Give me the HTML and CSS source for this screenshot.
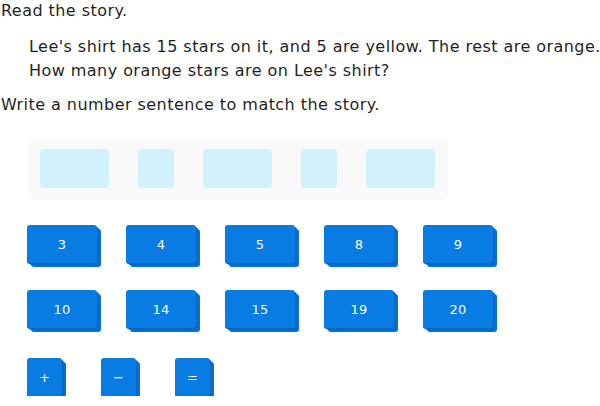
FILE: index.html
```html
<!DOCTYPE html>
<html>
<head>
<meta charset="utf-8">
<link rel="stylesheet" href="styles.css">
</head>
<body>
<div class="page">
  <p class="instr">Read the story.</p>
  <div class="story">
    <p>Lee's shirt has 15 stars on it, and 5 are yellow. The rest are orange.</p>
    <p>How many orange stars are on Lee's shirt?</p>
  </div>
  <p class="instr second">Write a number sentence to match the story.</p>
  <div class="answer">
    <div class="slot wide"></div>
    <div class="slot narrow"></div>
    <div class="slot wide"></div>
    <div class="slot narrow"></div>
    <div class="slot wide"></div>
  </div>
  <div class="tiles">
    <div class="row nums">
      <div class="tile">3</div>
      <div class="tile">4</div>
      <div class="tile">5</div>
      <div class="tile">8</div>
      <div class="tile">9</div>
    </div>
    <div class="row nums">
      <div class="tile">10</div>
      <div class="tile">14</div>
      <div class="tile">15</div>
      <div class="tile">19</div>
      <div class="tile">20</div>
    </div>
    <div class="row ops">
      <div class="tile op">+</div>
      <div class="tile op">&minus;</div>
      <div class="tile op">=</div>
    </div>
  </div>
</div>
</body>
</html>
```
FILE: styles.css
```css
html, body {
  margin: 0;
  padding: 0;
  background: #ffffff;
}
.page {
  font-family: "DejaVu Sans", Verdana, sans-serif;
  font-size: 16px;
  letter-spacing: 0.45px;
  color: #1f1f1f;
  padding: 0 0 0 1px;
}
p {
  margin: 0;
  white-space: nowrap;
}
.instr {
  line-height: 22px;
}
.story {
  padding: 13px 0 0 28px;
  line-height: 24px;
}
.second {
  margin-top: 11px;
}
.answer {
  margin: 21px 0 0 27px;
  width: 395px;
  height: 39px;
  padding: 12px 13px 12px 12px;
  background: #f9f9f9;
  border-radius: 5px;
  display: flex;
  gap: 29px;
}
.slot {
  height: 39px;
  background: #d1f1fd;
  border-radius: 4px;
}
.slot.wide {
  width: 69px;
}
.slot.narrow {
  width: 36px;
}
.tiles {
  margin: 25px 0 0 26px;
  display: flex;
  flex-direction: column;
  gap: 27px;
}
.row {
  display: flex;
}
.row.nums {
  gap: 29px;
}
.row.ops {
  gap: 39px;
  margin-top: 3px;
}
.tile {
  width: 70px;
  height: 38px;
  background: #087ce2;
  color: #ffffff;
  border-radius: 3px;
  display: flex;
  align-items: center;
  justify-content: center;
  font-size: 13px;
  letter-spacing: 0.3px;
  box-shadow: 0 1px 0 #0a64bb, 2px 2px 0 #0668c8, 4px 4px 0 #0670d5;
}
.tile.op {
  width: 35px;
  height: 38px;
}
```
